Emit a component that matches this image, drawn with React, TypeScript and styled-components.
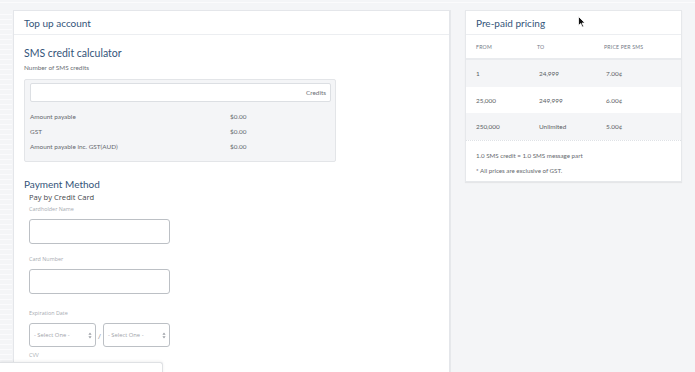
import React from "react";
import styled, { createGlobalStyle } from "styled-components";

const Global = createGlobalStyle`
  html, body { margin: 0; padding: 0; }
  body { font-family: Lato, "Open Sans", sans-serif; background: #f4f5f7; }
  * { box-sizing: border-box; }
`;

const Page = styled.div`
  position: relative;
  width: 695px;
  height: 372px;
  overflow: hidden;
  display: flex;
  align-items: flex-start;
  padding: 10px 0 0 13px;
  background-color: #f4f5f7;
  background-image:
    linear-gradient(to bottom, #fbfbfc 0 1px, transparent 1px),
    repeating-linear-gradient(to bottom, transparent 0 4px, #fbfbfd 4px 5px);
  background-size: 100% 4px, 12px 352px;
  background-position: 0 2px, 0 10px;
  background-repeat: no-repeat;
`;

const MainCard = styled.section`
  width: 437px;
  height: 380px;
  background: #fff;
  border: 1px solid #e4e6ea;
  border-bottom: none;
  display: flex;
  flex-direction: column;
`;

const CardHeader = styled.header`
  height: 24px;
  flex: none;
  display: flex;
  align-items: center;
  padding: 0 10px;
  border-bottom: 1px solid #eceef1;
`;

const CardTitle = styled.h2`
  margin: 0;
  font-family: Lato, sans-serif;
  font-weight: 400;
  font-size: 10px;
  color: #335479;
`;

const CardBody = styled.div`
  padding: 11px 10px 0;
  display: flex;
  flex-direction: column;
`;

const SectionTitle = styled.h3<{ $size?: number }>`
  margin: 0;
  font-family: Lato, sans-serif;
  font-weight: 400;
  font-size: ${(p) => p.$size ?? 10.5}px;
  line-height: 14px;
  color: #335479;
`;

const SmallText = styled.div`
  font-family: Lato, sans-serif;
  font-size: 6.4px;
  color: #6b6f75;
  line-height: 10px;
  margin-top: 3px;
`;

const CalcBox = styled.div`
  margin-top: 6px;
  width: 312px;
  background: #f4f5f7;
  border: 1px solid #e3e5e8;
  border-radius: 2px;
  padding: 3px 4px 7px 5px;
`;

const CreditsInput = styled.div`
  height: 19px;
  background: #fff;
  border: 1px solid #dcdfe3;
  border-radius: 2px;
  display: flex;
  align-items: center;
  justify-content: flex-end;
  padding-right: 4px;
  font-family: Lato, sans-serif;
  font-size: 6.4px;
  color: #6b6f75;
  margin-bottom: 7px;
`;

const CalcRow = styled.div`
  display: grid;
  grid-template-columns: 200px 1fr;
  height: 15px;
  align-items: center;
  font-family: Lato, sans-serif;
  font-size: 6.4px;
  color: #64686d;
`;

const PaymentTitle = styled(SectionTitle)`
  margin-top: 15px;
`;

const PayForm = styled.div`
  padding-left: 5px;
  display: flex;
  flex-direction: column;
`;

const PayHeading = styled.div`
  font-family: "Open Sans", sans-serif;
  font-size: 7.6px;
  color: #44474c;
  line-height: 12px;
`;

const FieldLabel = styled.div<{ $mt: number }>`
  font-family: "Open Sans", sans-serif;
  font-size: 5.4px;
  color: #a7abb1;
  line-height: 10px;
  margin-top: ${(p) => p.$mt}px;
  margin-bottom: 5px;
`;

const TextField = styled.div`
  width: 141px;
  height: 25px;
  border: 1px solid #bcc0c5;
  border-radius: 3px;
  background: #fff;
`;

const SelectRow = styled.div`
  display: flex;
  align-items: center;
  gap: 2px;
`;

const SelectBox = styled.div`
  width: 67px;
  height: 24px;
  border: 1px solid #bcc0c5;
  border-radius: 3px;
  background: #fff;
  display: flex;
  align-items: center;
  justify-content: space-between;
  padding: 0 3px 0 4px;
  font-family: "Open Sans", sans-serif;
  font-size: 5.8px;
  color: #9ea2a8;
`;

const Slash = styled.span`
  font-family: "Open Sans", sans-serif;
  font-size: 8px;
  color: #9ea2a8;
`;

const SideColumn = styled.aside`
  align-self: stretch;
  padding-left: 14px;
  border-left: 1px solid #e6e8eb;
  height: 380px;
`;

const PriceCard = styled.section`
  width: 217px;
  background: #fff;
  border: 1px solid #e6e8eb;
  box-shadow: 0 1px 1px rgba(0, 0, 0, 0.06);
`;

const PriceTable = styled.div`
  display: flex;
  flex-direction: column;
`;

const PriceRow = styled.div<{ $shade?: boolean; $head?: boolean; $h: number }>`
  display: grid;
  grid-template-columns: 61px 67px 1fr;
  align-items: center;
  height: ${(p) => p.$h}px;
  padding-left: 10px;
  background: ${(p) => (p.$shade ? "#f4f5f7" : "#fff")};
  border-bottom: ${(p) => (p.$head ? "2px solid #e9ebee" : "none")};
  font-family: Lato, sans-serif;
  font-size: ${(p) => (p.$head ? 5.2 : 6.4)}px;
  letter-spacing: ${(p) => (p.$head ? 0.2 : 0)}px;
  color: ${(p) => (p.$head ? "#737a85" : "#5a5e64")};
`;

const Cell = styled.span<{ $shift?: number }>`
  padding-left: ${(p) => p.$shift ?? 0}px;
`;

const Footnotes = styled.div`
  border-top: 1px dotted #dfe2e6;
  padding: 7px 10px 3px;
  font-family: Lato, sans-serif;
  font-size: 6.2px;
  color: #64686d;
  line-height: 15px;
`;

const BottomPanel = styled.div`
  position: absolute;
  left: 0;
  top: 362px;
  width: 163px;
  height: 20px;
  background: #fff;
  border-top: 1px solid #dfe1e4;
  border-right: 1px solid #dfe1e4;
  border-top-right-radius: 3px;
  box-shadow: 0 -1px 3px rgba(0, 0, 0, 0.06);
`;

const Cursor = styled.svg`
  position: absolute;
  left: 578px;
  top: 16px;
`;

const SortArrows = () => (
  <svg width="4" height="7" viewBox="0 0 4 7">
    <path d="M2 0.5 L3.6 2.8 H0.4 Z M2 6.5 L3.6 4.2 H0.4 Z" fill="#9ea2a8" />
  </svg>
);

const rows = [
  { from: "1", to: "24,999", price: "7.00¢", shade: true, h: 27 },
  { from: "25,000", to: "249,999", price: "6.00¢", shade: false, h: 26 },
  { from: "250,000", to: "Unlimited", price: "5.00¢", shade: true, h: 27 },
];

export default function App() {
  return (
    <>
      <Global />
      <Page>
        <MainCard>
          <CardHeader>
            <CardTitle>Top up account</CardTitle>
          </CardHeader>
          <CardBody>
            <SectionTitle>SMS credit calculator</SectionTitle>
            <SmallText>Number of SMS credits</SmallText>
            <CalcBox>
              <CreditsInput>Credits</CreditsInput>
              <CalcRow>
                <span>Amount payable</span>
                <span>$0.00</span>
              </CalcRow>
              <CalcRow>
                <span>GST</span>
                <span>$0.00</span>
              </CalcRow>
              <CalcRow>
                <span>Amount payable inc. GST(AUD)</span>
                <span>$0.00</span>
              </CalcRow>
            </CalcBox>
            <PaymentTitle $size={10}>Payment Method</PaymentTitle>
            <PayForm>
              <PayHeading>Pay by Credit Card</PayHeading>
              <FieldLabel $mt={1}>Cardholder Name</FieldLabel>
              <TextField />
              <FieldLabel $mt={10}>Card Number</FieldLabel>
              <TextField />
              <FieldLabel $mt={14}>Expiration Date</FieldLabel>
              <SelectRow>
                <SelectBox>
                  <span>- Select One -</span>
                  <SortArrows />
                </SelectBox>
                <Slash>/</Slash>
                <SelectBox>
                  <span>- Select One -</span>
                  <SortArrows />
                </SelectBox>
              </SelectRow>
              <FieldLabel $mt={3}>CVV</FieldLabel>
            </PayForm>
          </CardBody>
        </MainCard>
        <SideColumn>
          <PriceCard>
            <CardHeader>
              <CardTitle>Pre-paid pricing</CardTitle>
            </CardHeader>
            <PriceTable>
              <PriceRow $head $h={25}>
                <Cell>FROM</Cell>
                <Cell>TO</Cell>
                <Cell>PRICE PER SMS</Cell>
              </PriceRow>
              {rows.map((r) => (
                <PriceRow key={r.from} $shade={r.shade} $h={r.h}>
                  <Cell>{r.from}</Cell>
                  <Cell $shift={2}>{r.to}</Cell>
                  <Cell $shift={2}>{r.price}</Cell>
                </PriceRow>
              ))}
            </PriceTable>
            <Footnotes>
              <div>1.0 SMS credit = 1.0 SMS message part</div>
              <div>* All prices are exclusive of GST.</div>
            </Footnotes>
          </PriceCard>
        </SideColumn>
        <BottomPanel />
        <Cursor width="8" height="12" viewBox="0 0 8 12">
          <path d="M0.5 0.5 V9.5 L2.7 7.5 L4.2 11 L5.6 10.4 L4.1 7 H7 Z" fill="#111" stroke="#fff" strokeWidth="0.8" />
        </Cursor>
      </Page>
    </>
  );
}
